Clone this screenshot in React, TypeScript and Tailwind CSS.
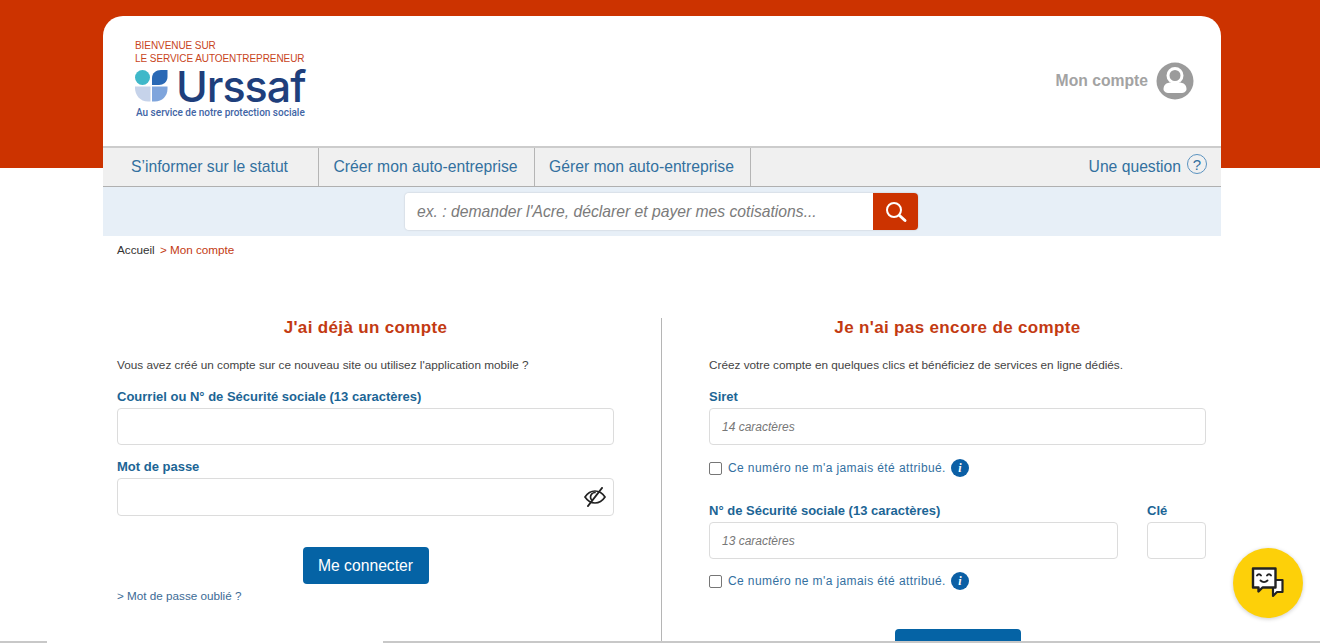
import type { ReactNode } from 'react';

const sans = "font-['Liberation_Sans',Arial,sans-serif]";

function Logo() {
  return (
    <div className="w-[172px] -mt-[6px]">
      <p className="text-[10px] leading-[13px] whitespace-nowrap text-[#c8441c] font-['Liberation_Sans',sans-serif] tracking-[-0.07px]">
        BIENVENUE SUR<br />LE SERVICE AUTOENTREPRENEUR
      </p>
      <div className="flex items-center h-[34px] mt-[4px]">
        <svg width="33" height="33" viewBox="0 0 33 33" className="shrink-0">
          <circle cx="7.500" cy="8.500" r="7.500" fill="#3fb8c9" />
          <path d="M17 16V9C17 4 21 1 26 1H32.500V8C32.500 13 28 16 24 16Z" fill="#2a69b5" />
          <path d="M0 17.500H15.500V32.500H13C5 32.500 0 26 0 19Z" fill="#c6d3ea" />
          <path d="M17 17.500H32.500V20C32.500 27 27 32.500 20 32.500H17Z" fill="#7fa5dc" />
        </svg>
        <div className="ml-[8px] text-[43px] leading-[34px] font-medium text-[#1f3f7c] font-['Inter',sans-serif] tracking-[-1px]">
          Urssaf
        </div>
      </div>
      <p className="mt-[4px] ml-[1px] text-[10px] leading-[11px] font-medium text-[#3f65a5] font-['Roboto',sans-serif] whitespace-nowrap">
        Au service de notre protection sociale
      </p>
    </div>
  );
}

function AccountIcon() {
  return (
    <svg width="38" height="38" viewBox="0 0 38 38">
      <circle cx="19" cy="19" r="18.500" fill="#9b9b9b" />
      <circle cx="19" cy="13.500" r="7" fill="none" stroke="#fff" strokeWidth="3" />
      <path d="M7.500 27C7.500 22.500 11 20.500 15 20.500H23C27 20.500 30.500 22.500 30.500 27C30.500 29.500 28 31 25 31H13C10 31 7.500 29.500 7.500 27Z" fill="#fff" />
    </svg>
  );
}

function SearchIcon() {
  return (
    <svg width="24" height="24" viewBox="0 0 24 24" fill="none" stroke="#fff" strokeLinecap="round">
      <circle cx="10" cy="10" r="7" strokeWidth="2" />
      <path d="M15.500 15.500L21 20.500" strokeWidth="3" />
    </svg>
  );
}

function EyeSlashIcon() {
  return (
    <svg width="22" height="20" viewBox="0 0 22 20" fill="none" stroke="#222" strokeWidth="1.700" strokeLinecap="round">
      <path d="M1 10C4 5.500 7.500 4 11 4C14.500 4 18 5.500 21 10C18 14.500 14.500 16 11 16C7.500 16 4 14.500 1 10Z" />
      <path d="M11 5.500C8.500 5.500 6.500 7.500 6.500 10C6.500 11 6.800 12 7.500 12.800" />
      <path d="M18 1L4 19" strokeWidth="2" />
    </svg>
  );
}

function NavLink({ label }: { label: string }) {
  return (
    <a className="w-[216px] pr-[2px] flex items-center justify-center h-full border-r border-[#b5b5b5] text-[15.700px] text-[#33709f]">
      {label}
    </a>
  );
}

function Label({ children }: { children: ReactNode }) {
  return <label className="block text-[13px] leading-[16px] font-bold text-[#1c6595]">{children}</label>;
}

function Field({ placeholder, className = '', children }: { placeholder?: string; className?: string; children?: ReactNode }) {
  return (
    <div className={`flex items-center justify-between rounded-[4px] border border-[#dcdcdc] bg-white px-3 text-[12px] italic text-[#777] ${className}`}>
      <span>{placeholder}</span>
      {children}
    </div>
  );
}

function InfoCheck({ className = '' }: { className?: string }) {
  return (
    <div className={`flex items-center ${className}`}>
      <span className="w-[13px] h-[13px] rounded-[2px] border border-[#767676] bg-white" />
      <span className="ml-[6px] text-[12px] text-[#33709f] tracking-[0.4px]">Ce numéro ne m'a jamais été attribué.</span>
      <span className="ml-[5px] w-[18px] h-[18px] rounded-full bg-[#0b5fa5] flex items-center justify-center text-white text-[12px] font-bold italic font-['Liberation_Serif',serif]">
        i
      </span>
    </div>
  );
}

function ChatIcon() {
  return (
    <svg width="36" height="36" viewBox="0 0 36 36" fill="none">
      <path d="M21 22H23V31L27 27H32.500V15H26" fill="#fff" stroke="#222" strokeWidth="2.200" strokeLinejoin="round" />
      <path d="M3 3.500H25.500V22.500H12.500L8.500 26.500V22.500H3Z" fill="#fff" stroke="#222" strokeWidth="2.400" strokeLinejoin="round" />
      <path d="M7 10.500C8 8.800 10 8.800 11 10.500M17 10.500C18 8.800 20 8.800 21 10.500M10.500 15.500C12.500 17.500 15.500 17.500 17.500 15.500" stroke="#222" strokeWidth="1.800" strokeLinecap="round" />
    </svg>
  );
}

export default function App() {
  return (
    <div className={`${sans} relative h-[643px] overflow-hidden bg-[linear-gradient(#cc3300_168px,#fff_168px)]`}>
      <div className="mx-auto w-[1118px] translate-x-[2px] pt-4">

        {/* Header */}
        <div className="flex items-center justify-between h-[130px] bg-white rounded-t-[20px] pl-8 pr-[27px]">
          <Logo />
          <div className="flex items-center gap-2">
            <span className="text-[15.700px] font-bold text-[#a3a3a3]">Mon compte</span>
            <AccountIcon />
          </div>
        </div>

        {/* Menu */}
        <div className="flex items-center h-[41px] bg-[#f0f0f0] border-t-2 border-b border-t-[#cccccc] border-b-[#b0b0b0]">
          <NavLink label="S’informer sur le statut" />
          <NavLink label="Créer mon auto-entreprise" />
          <NavLink label="Gérer mon auto-entreprise" />
          <a className="ml-auto mr-[14px] flex items-center gap-[6px] text-[15.700px] text-[#33709f]">
            Une question
            <span className="w-[20px] h-[20px] -mt-[5px] rounded-full border-[1.500px] border-[#5b93c0] flex items-center justify-center text-[15px] leading-none">?</span>
          </a>
        </div>

        {/* Recherche */}
        <div className="flex items-center justify-center h-[49px] pr-[1px] bg-[#e7eff7]">
          <div className="flex w-[513px] h-[37px] rounded-[4px] shadow-[0_0_2px_rgba(0,0,0,0.2)]">
            <div className="flex-1 flex items-center rounded-l-[4px] bg-white pl-3 text-[15.700px] italic text-[#7b7b7b]">
              ex. : demander l'Acre, déclarer et payer mes cotisations...
            </div>
            <div className="w-[45px] flex items-center justify-center rounded-r-[4px] bg-[#cc3300]">
              <SearchIcon />
            </div>
          </div>
        </div>

        {/* Fil d'ariane */}
        <p className="mt-[7px] pl-[14px] text-[11.700px] leading-[14px] text-[#333]">
          Accueil <span className="ml-[2px] text-[#c33a12]">&gt; Mon compte</span>
        </p>

        {/* Colonnes */}
        <div className="grid grid-cols-[558px_1fr] mt-[61px]">
          <div className="pl-[14px] pr-[47px]">
            <h2 className="text-center text-[17px] leading-[20px] font-bold text-[#c33a12] tracking-[0.35px]">J'ai déjà un compte</h2>
            <p className="mt-[20px] text-[11.770px] leading-[14px] text-[#444]">
              Vous avez créé un compte sur ce nouveau site ou utilisez l'application mobile ?
            </p>
            <div className="mt-[17px]"><Label>Courriel ou N° de Sécurité sociale (13 caractères)</Label></div>
            <Field className="mt-[3px] h-[37px]" />
            <div className="mt-[14px]"><Label>Mot de passe</Label></div>
            <Field className="mt-[3px] h-[38px] pr-[7px]">
              <EyeSlashIcon />
            </Field>
            <div className="flex justify-center mt-[31px]">
              <button className="w-[126px] h-[37px] rounded-[4px] bg-[#0563a5] text-white text-[15.700px]">Me connecter</button>
            </div>
            <p className="mt-[5px] text-[11.700px] leading-[14px] text-[#3c6b96]">&gt; Mot de passe oublié ?</p>
          </div>

          <div className="h-[330px] border-l border-[#b5b5b5] pl-[47px] pr-[15px]">
            <h2 className="text-center text-[17px] leading-[20px] font-bold text-[#c33a12] tracking-[0.35px]">Je n'ai pas encore de compte</h2>
            <p className="mt-[20px] text-[11.770px] leading-[14px] text-[#444]">
              Créez votre compte en quelques clics et bénéficiez de services en ligne dédiés.
            </p>
            <div className="mt-[17px]"><Label>Siret</Label></div>
            <Field className="mt-[3px] h-[37px]" placeholder="14 caractères" />
            <InfoCheck className="mt-[14px]" />
            <div className="grid grid-cols-[409px_59px] gap-x-[29px] mt-[26px]">
              <Label>N° de Sécurité sociale (13 caractères)</Label>
              <Label>Clé</Label>
              <Field className="mt-[3px] h-[37px]" placeholder="13 caractères" />
              <Field className="mt-[3px] h-[37px]" />
            </div>
            <InfoCheck className="mt-[13px]" />
            <div className="flex justify-center mt-[39px]">
              <div className="w-[126px] h-[37px] rounded-[4px] bg-[#0563a5]" />
            </div>
          </div>
        </div>
      </div>

      {/* Bouton chat */}
      <button className="absolute left-[1233px] top-[548px] w-[70px] h-[70px] rounded-full bg-[#fdd009] shadow-[0_1px_4px_rgba(0,0,0,0.2)] flex items-center justify-center">
        <ChatIcon />
      </button>

      {/* Bord bas */}
      <div className="absolute inset-x-0 bottom-0 h-[2px] bg-[#c8c8c8]" />
      <div className="absolute left-[47px] bottom-0 w-[336px] h-[2px] bg-white" />
    </div>
  );
}
